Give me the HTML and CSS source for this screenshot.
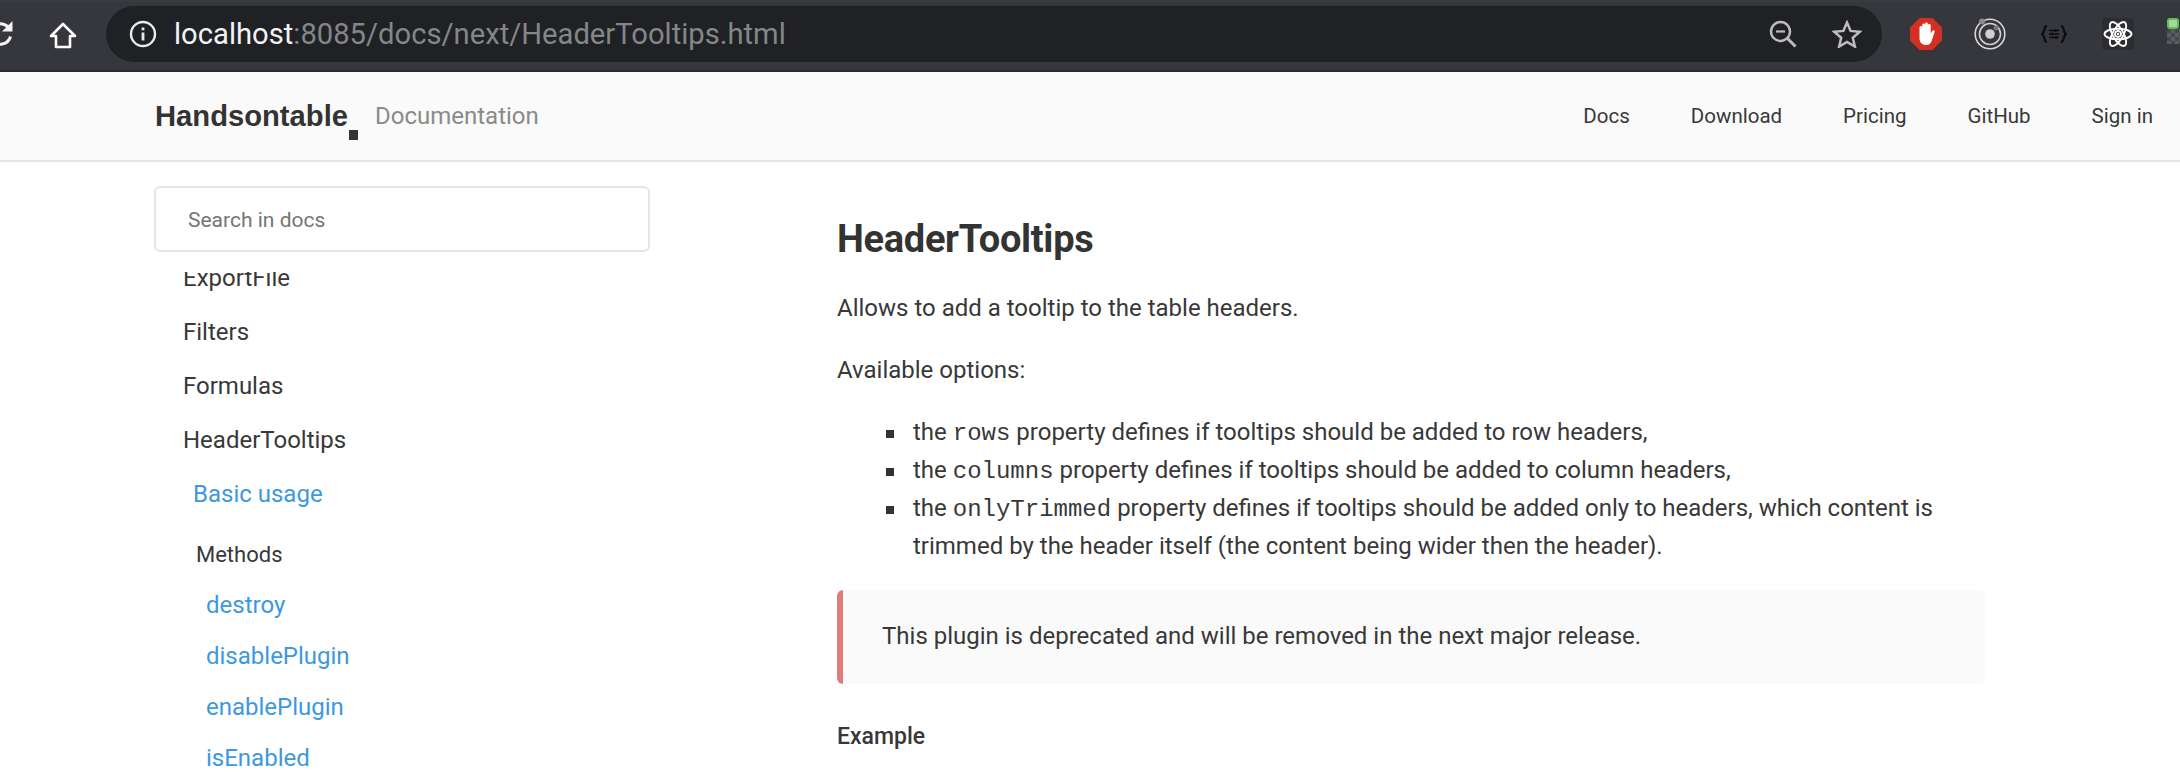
FILE: index.html
```html
<!DOCTYPE html>
<html lang="en">
<head>
<meta charset="utf-8">
<title>HeaderTooltips</title>
<link rel="stylesheet" href="styles.css">
</head>
<body>
<div class="chrome">
  <svg class="ic-reload" width="14" height="30" viewBox="0 0 14 30"><path d="M10.500 17.500A10.500 10.500 0 0 1-8 21M-8 9A10.500 10.500 0 0 1 8 8" fill="none" stroke="#f4f4f4" stroke-width="3"/><path d="M12.500 2v10.500H2z" fill="#f4f4f4"/></svg>
  <svg class="ic-home" width="28" height="27" viewBox="0 0 28 27"><path d="M14 2 2 14h5v11h14V14h5z" fill="none" stroke="#fff" stroke-width="2.600" stroke-linejoin="round"/></svg>
  <div class="omni">
    <svg class="ic-info" width="28" height="28" viewBox="0 0 28 28"><circle cx="14" cy="14" r="12" fill="none" stroke="#e8eaed" stroke-width="2.400"/><rect x="12.600" y="12.500" width="2.800" height="8" fill="#e8eaed"/><rect x="12.600" y="7.500" width="2.800" height="2.800" fill="#e8eaed"/></svg>
    <div class="url"><span class="url-host">localhost</span>:8085/docs/next/HeaderTooltips.html</div>
    <svg class="ic-zoom" width="28" height="28" viewBox="0 0 28 28"><circle cx="11.500" cy="11.500" r="9.500" fill="none" stroke="#bdbdbd" stroke-width="2.400"/><path d="M7 11.500h9" stroke="#bdbdbd" stroke-width="2.200"/><path d="m18.500 18.500 8 8" stroke="#bdbdbd" stroke-width="3"/></svg>
    <svg class="ic-star" width="30" height="28" viewBox="0 0 30 28"><path d="m15 2.500 3.600 8.400 9.200.8-7 6 2.100 8.900L15 21.900l-7.900 4.700 2.100-8.900-7-6 9.200-.8z" fill="none" stroke="#bdbdbd" stroke-width="2.500"/></svg>
  </div>
  <div class="exts">
    <svg class="ext" width="32" height="32" viewBox="0 0 32 32"><path d="M9.500 0h13L32 9.500v13L22.500 32h-13L0 22.500v-13z" fill="#d32f23"/><path d="M9.500 16V9.500a1.400 1.400 0 0 1 2.800 0V7a1.400 1.400 0 0 1 2.800 0V6a1.400 1.400 0 0 1 2.800 0v1.500a1.400 1.400 0 0 1 2.800 0v8l1.500-2.400c1-1.500 3-.6 2.400 1L22 22c-.8 3-2.800 5-5.800 5-4.700 0-6.700-3-6.700-7z" fill="#fff"/></svg>
    <svg class="ext" width="32" height="32" viewBox="0 0 32 32"><circle cx="16" cy="16" r="14.800" fill="none" stroke="#d8d8d8" stroke-width="1.600"/><circle cx="16" cy="16" r="10.500" fill="none" stroke="#cfcfcf" stroke-width="1.600"/><circle cx="16" cy="16" r="4.800" fill="#cfcfcf"/><circle cx="8" cy="3.500" r="3" fill="#8a8a8a"/><circle cx="22" cy="10" r="2.500" fill="#777"/></svg>
    <svg class="ext ext-json" width="26" height="18" viewBox="0 0 26 18"><path d="M6 1C2.500 1 4 8 1 9c3 1 1.500 8 5 8M20 1c3.500 0 2 7 5 8-3 1-1.500 8-5 8" fill="none" stroke="#0c0c0c" stroke-width="2.200"/><path d="M8 5.500h10M8 9h10M8 12.500h10" stroke="#0c0c0c" stroke-width="1.600"/><path d="M14.500 4v3M11 7.500v3M15 11v3" stroke="#0c0c0c" stroke-width="1.800"/></svg>
    <div class="ext-react"><svg width="30" height="26" viewBox="-15 -13 30 26"><g fill="none" stroke="#fff" stroke-width="1.900"><ellipse rx="13.500" ry="5.300"/><ellipse rx="13.500" ry="5.300" transform="rotate(60)"/><ellipse rx="13.500" ry="5.300" transform="rotate(120)"/><circle r="3"/></g><circle r="1.200" fill="#fff"/></svg></div>
    <div class="ext-last"><span class="ext-dot"></span><span class="ext-smudge"></span></div>
  </div>
</div>

<header class="site-head">
  <div class="logo">Handsontable<span class="logo-dot"></span></div>
  <div class="logo-sub">Documentation</div>
  <nav class="top-nav">
    <a>Docs</a><a>Download</a><a>Pricing</a><a>GitHub</a><a>Sign in</a>
  </nav>
</header>

<div class="page">
  <aside class="side">
    <div class="search">Search in docs</div>
    <div class="side-scroll">
      <ul class="side-list">
        <li class="item">ExportFile</li>
        <li class="item">Filters</li>
        <li class="item">Formulas</li>
        <li class="item">HeaderTooltips</li>
        <li class="item sub">Basic usage</li>
        <li class="methods">Methods</li>
        <li class="method">destroy</li>
        <li class="method">disablePlugin</li>
        <li class="method">enablePlugin</li>
        <li class="method">isEnabled</li>
      </ul>
    </div>
  </aside>
  <main class="doc">
    <h1>HeaderTooltips</h1>
    <p>Allows to add a tooltip to the table headers.</p>
    <p>Available options:</p>
    <ul class="opts">
      <li>the <code>rows</code> property defines if tooltips should be added to row headers,</li>
      <li>the <code>columns</code> property defines if tooltips should be added to column headers,</li>
      <li>the <code>onlyTrimmed</code> property defines if tooltips should be added only to headers, which content is trimmed by the header itself (the content being wider then the header).</li>
    </ul>
    <div class="notice">This plugin is deprecated and will be removed in the next major release.</div>
    <h5>Example</h5>
  </main>
</div>
</body>
</html>
```
FILE: styles.css
```css
* { box-sizing: border-box; }
html, body { margin: 0; height: 780px; overflow: hidden; background: #fff; }
body { font-family: Roboto, "Liberation Sans", sans-serif; color: #383838; }

.chrome { height: 72px; background: #36373c; display: flex; align-items: center; border-top: 2px solid #3a3b40; border-bottom: 2px solid #2b2c30; }
.ic-reload { flex: none; margin-top: -4px; }
.ic-home { flex: none; margin-left: 35px; margin-top: -2px; }
.omni { flex: none; width: 1776px; height: 56px; margin-left: 29px; margin-top: -4px; border-radius: 28px; background: #202124; display: flex; align-items: center; padding-left: 23px; }
.url { margin-left: 17px; font-size: 29.2px; color: #84868a; white-space: nowrap; }
.url-host { color: #f1f3f4; }
.ic-zoom { margin-left: auto; }
.ic-star { margin-left: 35px; margin-right: 20px; }
.exts { display: flex; align-items: center; margin-left: 28px; margin-top: -4px; }
.ext { flex: none; display: block; }
.ext + .ext { margin-left: 32px; }
.ext-json { margin-left: 35px !important; }
.ext-react { flex: none; width: 32px; height: 32px; margin-left: 35px; background: #2c2d31; border-radius: 3px; display: flex; align-items: center; justify-content: center; }
.ext-last { flex: none; width: 32px; height: 32px; margin-left: 32px; }
.ext-dot { display: block; width: 12px; height: 11px; margin-left: 1px; border: 2px solid #5fbf52; background: #a5d99c; border-radius: 3px; }
.ext-smudge { display: block; width: 14px; height: 15px; margin-left: 1px; background: repeating-conic-gradient(#5c5d61 0 25%, #46474b 0 50%) 0 0 / 8px 8px; }

.site-head { height: 90px; background: #fafafa; border-bottom: 2px solid #e5e5e5; display: flex; align-items: center; padding: 0 27px 0 155px; }
.logo { font-family: "Liberation Sans", Arial, sans-serif; font-weight: 700; font-size: 29.2px; color: #333; display: flex; align-items: flex-end; margin-top: 1px; white-space: nowrap; }
.logo-dot { width: 9px; height: 10px; background: #333; margin-left: 1px; margin-bottom: -7px; }
.logo-sub { font-size: 24px; color: #8a8a8a; margin-left: 17px; margin-top: -1px; }
.top-nav { margin-left: auto; display: flex; gap: 61px; font-size: 20.5px; color: #383838; }

.page { display: flex; padding-left: 154px; }
.side { flex: none; width: 496px; padding-top: 24px; }
.search { height: 66px; border: 2px solid #e5e5e5; border-radius: 6px; padding: 2px 32px 0; display: flex; align-items: center; font-size: 21px; color: #757575; background: #fff; margin-bottom: 20px; }
.side-scroll { height: 510px; overflow: hidden; }
.side-list { list-style: none; margin: -21px 0 0; padding: 0 0 0 29px; font-size: 24px; }
.item { line-height: 54px; }
.sub { color: #3e98e0; padding-left: 10px; }
.methods { font-size: 22px; padding-left: 13px; line-height: 51px; margin-top: 8px; }
.method { color: #3e98e0; padding-left: 23px; line-height: 51px; }

.doc { flex: none; width: 1148px; margin-left: 187px; font-size: 24px; line-height: 38px; }
.doc h1 { margin: 0; font-size: 38px; font-weight: 700; line-height: 48px; padding-top: 53px; color: #333; letter-spacing: -.3px; }
.doc p { margin: 0 0 24px; }
.doc h1 + p { margin-top: 26px; }
.opts { list-style: none; margin: 0 0 25px; padding: 0 0 0 76px; }
.opts li { position: relative; }
.opts li::before { content: ""; position: absolute; left: -27px; top: 17px; width: 8px; height: 8px; background: #333; }
code { font-family: "Liberation Mono", monospace; font-size: 24px; line-height: 1; }
.notice { height: 94px; display: flex; align-items: center; padding: 0 0 2px 39px; background: #fafafa; border-left: 6px solid #e07b7b; border-radius: 6px; }
.doc h5 { margin: 36px 0 0; font-size: 23px; font-weight: 500; line-height: 34px; }
```
